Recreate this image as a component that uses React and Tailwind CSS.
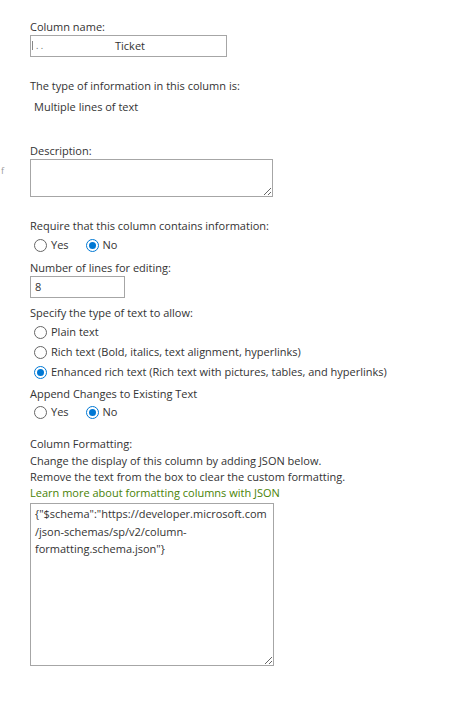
import React from 'react';

const Radio = ({ checked, label }) => (
  <label className="flex items-center">
    {checked ? (
      <span className="w-[13px] h-[13px] rounded-full border border-[#0078d4] flex items-center justify-center">
        <span className="w-[7px] h-[7px] rounded-full bg-[#0078d4]" />
      </span>
    ) : (
      <span className="w-[13px] h-[13px] rounded-full border border-[#666]" />
    )}
    <span className="ml-[4px]">{label}</span>
  </label>
);

const YesNo = () => (
  <div className="flex items-center gap-[17px] pl-[4px] h-[18px]">
    <Radio label="Yes" />
    <Radio checked label="No" />
  </div>
);

export default function App() {
  return (
    <div
      className="relative w-[456px] h-[703px] bg-white text-[11px] leading-[16px] text-[#333]"
      style={{ fontFamily: '"Open Sans", "Noto Sans", sans-serif' }}
    >
      <span className="absolute left-[1px] top-[163px] text-[9px] text-[#999]">f</span>

      <div className="pl-[30px] pt-[19px]">
        <div>Column name:</div>
        <div className="w-[197px] h-[22px] border border-[#a6a6a6] flex items-center relative">
          <span className="absolute left-[1px] top-[5px] w-px h-[9px] bg-[#888]" />
          <span className="absolute left-[5px] top-[2px] text-[9px] text-[#666]">. .</span>
          <span className="ml-[84px]">Ticket</span>
        </div>

        <div className="mt-[21px]">The type of information in this column is:</div>
        <div className="mt-[5px] pl-[4px]">Multiple lines of text</div>

        <div className="mt-[28px]">Description:</div>
        <textarea className="block w-[243px] h-[38px] border border-[#a6a6a6] outline-none" />

        <div className="mt-[21px]">Require that this column contains information:</div>
        <div className="mt-[2px]"><YesNo /></div>

        <div className="mt-[6px]">Number of lines for editing:</div>
        <div className="w-[95px] h-[22px] border border-[#a6a6a6] flex items-center pl-[4px]">8</div>

        <div className="mt-[7px]">Specify the type of text to allow:</div>
        <div className="pl-[4px] flex flex-col gap-[2px] mt-[2px]">
          <div className="h-[18px] flex items-center"><Radio label="Plain text" /></div>
          <div className="h-[18px] flex items-center"><Radio label="Rich text (Bold, italics, text alignment, hyperlinks)" /></div>
          <div className="h-[18px] flex items-center"><Radio checked label="Enhanced rich text (Rich text with pictures, tables, and hyperlinks)" /></div>
        </div>
        <div className="mt-[5px]">Append Changes to Existing Text</div>
        <div className="mt-[1px]"><YesNo /></div>

        <div className="mt-[15px]">Column Formatting:</div>
        <div className="mt-[1px]">Change the display of this column by adding JSON below.</div>
        <div>Remove the text from the box to clear the custom formatting.</div>
        <div className="text-[#498205]">Learn more about formatting columns with JSON</div>
        <textarea
          className="block mt-[2px] w-[244px] h-[163px] border border-[#a6a6a6] outline-none px-[4px] py-[1px] text-[11px] leading-[17.5px] text-[#333]"
          style={{ fontFamily: '"Open Sans", "Noto Sans", sans-serif' }}
          defaultValue={'{"$schema":"https://developer.microsoft.com\u200B/json-schemas/sp/v2/column-formatting.schema.json"}'}
        />
      </div>
    </div>
  );
}
